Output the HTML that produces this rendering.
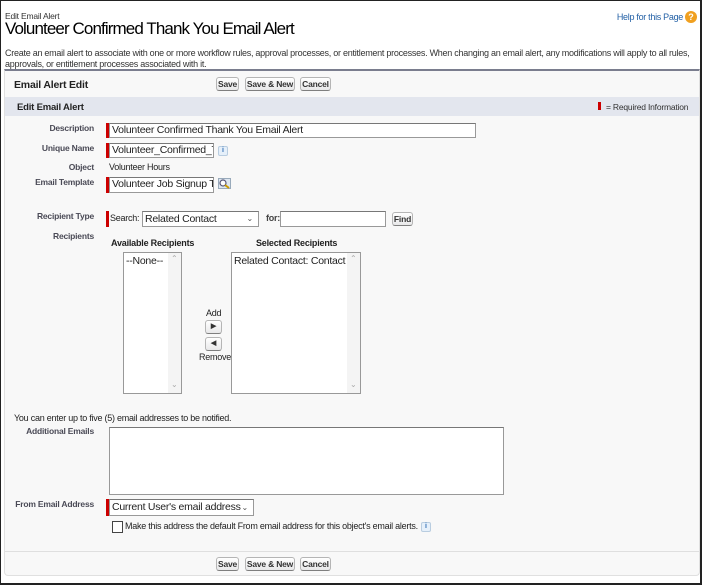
<!DOCTYPE html>
<html><head><meta charset="utf-8"><style>
*{margin:0;padding:0;box-sizing:border-box}
body{width:702px;height:585px;background:#fff;font-family:"Liberation Sans",Arial,sans-serif;position:relative;overflow:hidden;color:#222}
.frame{position:absolute;left:0;top:0;width:702px;height:585px;border:1px solid #222;border-right-width:2px;border-bottom-width:2px;z-index:5;pointer-events:none}
.a{position:absolute;white-space:nowrap}
.s{font-size:9px;letter-spacing:-0.25px}
.lbl{position:absolute;right:608px;font-size:8.5px;font-weight:bold;color:#4a4a56;white-space:nowrap;letter-spacing:-0.2px}
.btn{position:absolute;height:14px;border:1px solid #b5b5b5;border-bottom-color:#7f7f7f;border-radius:3px;background:linear-gradient(#fff,#e8e8e9);font-size:8.5px;font-weight:bold;color:#333;text-align:center;line-height:12px;white-space:nowrap;letter-spacing:-0.2px}
.inp{position:absolute;background:#fff;border:1px solid #999;border-top-color:#777;font-size:10.5px;letter-spacing:-0.25px;line-height:13px;padding-left:2px;overflow:hidden;white-space:nowrap}
.req{position:absolute;width:3px;background:#c00}
.info{position:absolute;width:10px;height:10px;border:1px solid #b9cde0;background:#e6f0fa;border-radius:2px;color:#3470b5;font-size:7px;font-weight:bold;text-align:center;line-height:8px}
.arr{position:absolute;font-size:8px;color:#aaa}
</style></head><body>
<div class="frame"></div>
<div class="a" style="left:5px;top:11px;font-size:8.5px;color:#333;letter-spacing:-0.2px">Edit Email Alert</div>
<div class="a" style="left:5px;top:19px;font-size:17px;letter-spacing:-0.9px;color:#000">Volunteer Confirmed Thank You Email Alert</div>
<div class="a" style="right:19px;top:12px;font-size:9px;letter-spacing:-0.3px;color:#2461a6">Help for this Page</div>
<div class="a" style="left:685px;top:11px;width:12px;height:12px;border-radius:50%;background:#f0a020;color:#fff;font-size:9px;font-weight:bold;text-align:center;line-height:12px">?</div>
<div class="a" style="left:5px;top:48px;font-size:9px;letter-spacing:-0.26px;color:#333;line-height:10.5px">Create an email alert to associate with one or more workflow rules, approval processes, or entitlement processes. When changing an email alert, any modifications will apply to all rules,<br>approvals, or entitlement processes associated with it.</div>
<div class="a" style="left:4px;top:69px;width:696px;height:507px;background:#f8f8f8;border:1px solid #e0e0e0;border-top:2px solid #7a7d8e;border-radius:0 0 4px 4px"></div>
<div class="a" style="left:14px;top:79px;font-size:10.5px;letter-spacing:-0.2px;font-weight:bold;color:#222">Email Alert Edit</div>
<div class="btn" style="left:216px;top:77px;width:23px">Save</div>
<div class="btn" style="left:245px;top:77px;width:50px">Save &amp; New</div>
<div class="btn" style="left:300px;top:77px;width:31px">Cancel</div>
<div class="a" style="left:5px;top:97px;width:694px;height:19px;background:#e3e6ee"></div>
<div class="a" style="left:17px;top:102px;font-size:9.5px;letter-spacing:-0.2px;font-weight:bold;color:#222">Edit Email Alert</div>
<div class="req" style="left:598px;top:102px;height:8px"></div>
<div class="a" style="left:606px;top:102px;font-size:8.5px;letter-spacing:-0.2px;color:#333">= Required Information</div>

<div class="lbl" style="top:123px">Description</div>
<div class="req" style="left:106px;top:123px;height:15px"></div>
<div class="inp" style="left:109px;top:123px;width:367px;height:15px">Volunteer Confirmed Thank You Email Alert</div>
<div class="lbl" style="top:143px">Unique Name</div>
<div class="req" style="left:106px;top:143px;height:15px"></div>
<div class="inp" style="left:109px;top:143px;width:105px;height:15px">Volunteer_Confirmed_Thank</div>
<div class="info" style="left:218px;top:146px">i</div>
<div class="lbl" style="top:162px">Object</div>
<div class="a s" style="left:109px;top:162px;color:#222">Volunteer Hours</div>
<div class="lbl" style="top:177px">Email Template</div>
<div class="req" style="left:106px;top:177px;height:16px"></div>
<div class="inp" style="left:109px;top:177px;width:105px;height:16px">Volunteer Job Signup Thank</div>
<svg class="a" style="left:218px;top:178px" width="13" height="12"><rect x="0.5" y="0.5" width="12" height="10" fill="#dde6f0" stroke="#9ab"/><circle cx="5" cy="5" r="3" fill="#fff" stroke="#557" stroke-width="1.2"/><line x1="7" y1="7" x2="11" y2="10" stroke="#c90" stroke-width="2"/></svg>

<div class="lbl" style="top:211px">Recipient Type</div>
<div class="req" style="left:106px;top:211px;height:16px"></div>
<div class="a s" style="left:110px;top:213px">Search:</div>
<div class="inp" style="left:142px;top:211px;width:117px;height:16px;line-height:14px">Related Contact<span style="position:absolute;right:5px;font-size:8px;color:#555">&#8964;</span></div>
<div class="a s" style="left:266px;top:213px;font-weight:bold;color:#444">for:</div>
<div class="inp" style="left:280px;top:211px;width:106px;height:16px"></div>
<div class="btn" style="left:392px;top:212px;width:21px">Find</div>
<div class="lbl" style="top:231px">Recipients</div>
<div class="a" style="left:111px;top:238px;font-size:9px;letter-spacing:-0.2px;font-weight:bold;color:#222">Available Recipients</div>
<div class="a" style="left:256px;top:238px;font-size:9px;letter-spacing:-0.2px;font-weight:bold;color:#222">Selected Recipients</div>
<div class="inp" style="left:123px;top:252px;width:59px;height:142px;border-color:#999;line-height:16px">--None--</div>
<div class="a" style="left:168px;top:253px;width:13px;height:140px;background:#f4f4f4"></div>
<div class="arr" style="left:171px;top:254px">&#8963;</div><div class="arr" style="left:171px;top:380px">&#8964;</div>
<div class="inp" style="left:231px;top:252px;width:130px;height:142px;border-color:#999;line-height:16px">Related Contact: Contact</div>
<div class="a" style="left:347px;top:253px;width:13px;height:140px;background:#f4f4f4"></div>
<div class="arr" style="left:350px;top:254px">&#8963;</div><div class="arr" style="left:350px;top:380px">&#8964;</div>
<div class="a s" style="left:206px;top:308px">Add</div>
<div class="btn" style="left:205px;top:320px;width:17px;font-size:7px">&#9654;</div>
<div class="btn" style="left:205px;top:337px;width:17px;font-size:7px">&#9664;</div>
<div class="a s" style="left:199px;top:352px">Remove</div>

<div class="a s" style="left:14px;top:413px;color:#222">You can enter up to five (5) email addresses to be notified.</div>
<div class="lbl" style="top:426px">Additional Emails</div>
<div class="inp" style="left:109px;top:427px;width:395px;height:68px"></div>
<div class="lbl" style="top:499px">From Email Address</div>
<div class="req" style="left:106px;top:499px;height:17px"></div>
<div class="inp" style="left:109px;top:499px;width:145px;height:17px;line-height:15px">Current User's email address<span style="position:absolute;right:5px;font-size:8px;color:#555;background:#fff">&#8964;</span></div>
<div class="a" style="left:112px;top:521px;width:11px;height:12px;border:1px solid #444;background:#fff"></div>
<div class="a s" style="left:125px;top:521px;color:#222;letter-spacing:-0.25px">Make this address the default From email address for this object's email alerts.</div>
<div class="info" style="left:421px;top:522px">i</div>
<div class="a" style="left:5px;top:551px;width:694px;height:1px;background:#dfdfdf"></div>
<div class="btn" style="left:216px;top:557px;width:23px">Save</div>
<div class="btn" style="left:245px;top:557px;width:50px">Save &amp; New</div>
<div class="btn" style="left:300px;top:557px;width:31px">Cancel</div>
</body></html>
